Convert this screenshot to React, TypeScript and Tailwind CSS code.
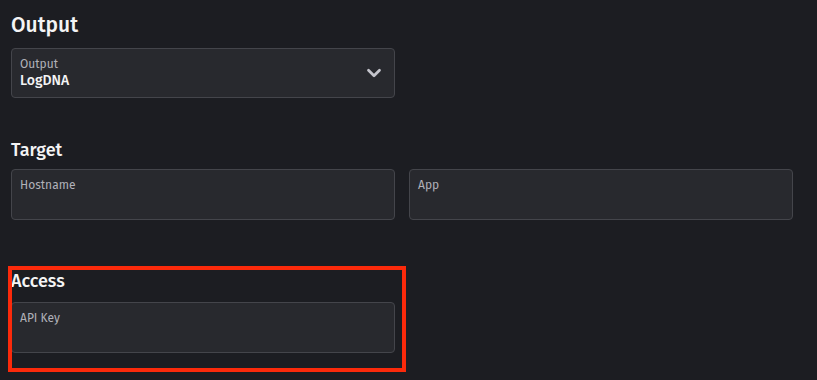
import { ChevronDown } from 'lucide-react'

const font = { fontFamily: '"Fira Sans", "Noto Sans", "Open Sans", sans-serif' }

function TextField({ label }: { label: string }) {
    return (
        <div className="h-[51px] rounded-[4px] border border-[#44454b] bg-[#28292e] px-[8px] pt-[7px]">
            <div className="text-[12px] leading-[16px] text-[#b1b1b9]">{label}</div>
        </div>
    )
}

export default function App() {
    return (
        <div className="min-h-[380px] w-[817px] bg-[#1c1d22] pl-[11px] pr-[24px] pt-[11px]" style={font}>
            {/* Output */}
            <section>
                <h2 className="text-[21px] leading-[28px] font-medium text-[#f4f4f5]">Output</h2>
                <div className="mt-[9px] flex h-[50px] w-[384px] items-center justify-between rounded-[4px] border border-[#44454b] bg-[#28292e] pl-[8px] pr-[9px]">
                    <div>
                        <div className="text-[12px] leading-[16px] text-[#b1b1b9]">Output</div>
                        <div className="text-[14px] leading-[18px] font-medium text-[#f4f4f5]">LogDNA</div>
                    </div>
                    <ChevronDown className="h-[22px] w-[22px] text-[#c4c4cc]" strokeWidth={3} />
                </div>
            </section>

            {/* Target */}
            <section className="mt-[39px]">
                <h2 className="text-[18px] leading-[26px] font-medium text-[#f4f4f5]">Target</h2>
                <div className="mt-[6px] grid grid-cols-2 gap-[14px]">
                    <TextField label="Hostname" />
                    <TextField label="App" />
                </div>
            </section>

            {/* Access */}
            <section className="relative mt-[48px] w-[384px]">
                <h2 className="text-[18px] leading-[26px] font-medium text-[#f4f4f5]">Access</h2>
                <div className="mt-[8px]">
                    <TextField label="API Key" />
                </div>
                <div className="pointer-events-none absolute -left-[3px] -right-[11px] -top-[2px] h-[106px] border-[4px] border-[#fb2a0b]" />
            </section>
        </div>
    )
}
